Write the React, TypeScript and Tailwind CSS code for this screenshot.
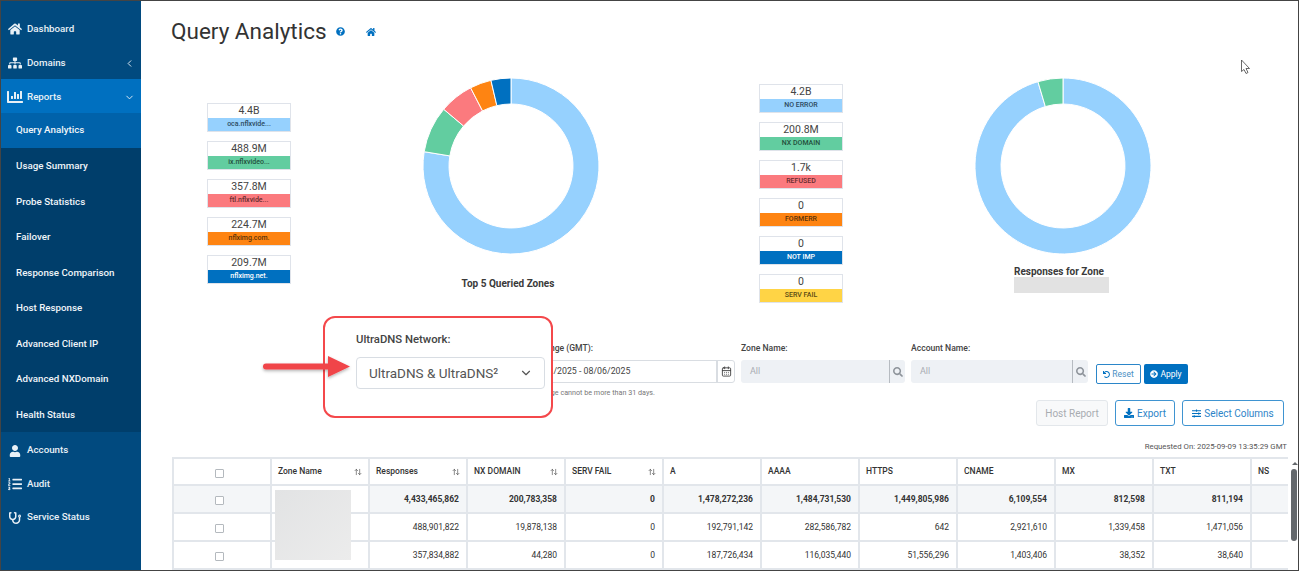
import React from 'react';
import { ChevronDown, ChevronLeft, ArrowUpDown, CalendarDays } from 'lucide-react';
import {
  FaHome, FaSitemap, FaChartBar, FaUser, FaListOl, FaStethoscope, FaQuestionCircle,
  FaSearch, FaUndo, FaArrowCircleRight, FaDownload, FaSlidersH,
} from 'react-icons/fa';

const subItems = [
  'Query Analytics', 'Usage Summary', 'Probe Statistics', 'Failover', 'Response Comparison',
  'Host Response', 'Advanced Client IP', 'Advanced NXDomain', 'Health Status',
];

const zones = [
  { value: '4.4B', label: 'oca.nflxvide...', bg: 'bg-[#96d1fe]', text: 'text-[#2c4a60]' },
  { value: '488.9M', label: 'ix.nflxvideo...', bg: 'bg-[#62cda0]', text: 'text-[#24503c]' },
  { value: '357.8M', label: 'ftl.nflxvide...', bg: 'bg-[#fb7a7e]', text: 'text-[#662c2e]' },
  { value: '224.7M', label: 'nflximg.com.', bg: 'bg-[#fe8412]', text: 'text-[#5a3208]' },
  { value: '209.7M', label: 'nflximg.net.', bg: 'bg-[#0070c0]', text: 'text-white' },
];

const responses = [
  { value: '4.2B', label: 'NO ERROR', bg: 'bg-[#96d1fe]', text: 'text-[#2c4a60]' },
  { value: '200.8M', label: 'NX DOMAIN', bg: 'bg-[#62cda0]', text: 'text-[#24503c]' },
  { value: '1.7k', label: 'REFUSED', bg: 'bg-[#fb7a7e]', text: 'text-[#662c2e]' },
  { value: '0', label: 'FORMERR', bg: 'bg-[#fe8412]', text: 'text-[#5a3208]' },
  { value: '0', label: 'NOT IMP', bg: 'bg-[#0070c0]', text: 'text-white' },
  { value: '0', label: 'SERV FAIL', bg: 'bg-[#ffd445]', text: 'text-[#5c4c14]' },
];

const columns = ['A', 'AAAA', 'HTTPS', 'CNAME', 'MX', 'TXT', 'NS'];

const rows = [
  ['4,433,465,862', '200,783,358', '0', '1,478,272,236', '1,484,731,530', '1,449,805,986', '6,109,554', '812,598', '811,194', ''],
  ['488,901,822', '19,878,138', '0', '192,791,142', '282,586,782', '642', '2,921,610', '1,339,458', '1,471,056', ''],
  ['357,834,882', '44,280', '0', '187,726,434', '116,035,440', '51,556,296', '1,403,406', '38,352', '38,640', ''],
];

const ringPath = (from: number, to: number) => {
  const pt = (f: number, r: number) => {
    const a = f * 2 * Math.PI;
    return `${(88 + r * Math.sin(a)).toFixed(2)} ${(88 - r * Math.cos(a)).toFixed(2)}`;
  };
  const large = to - from > 0.5 ? 1 : 0;
  return `M${pt(from, 88)} A88 88 0 ${large} 1 ${pt(to, 88)} L${pt(to, 62)} A62 62 0 ${large} 0 ${pt(from, 62)} Z`;
};

const Donut = ({ parts }: { parts: { share: number; color: string }[] }) => {
  let start = 0;
  return (
    <svg width="176" height="176" viewBox="0 0 176 176">
      {parts.map((p) => {
        const d = ringPath(start, start + p.share);
        start += p.share;
        return <path key={p.color} d={d} fill={p.color} stroke="#fff" strokeWidth="1" />;
      })}
    </svg>
  );
};

const Legend = ({ items }: { items: typeof zones }) => (
  <div className="flex flex-col gap-[9px] w-[84px]">
    {items.map((item) => (
      <div key={item.label} className="h-[29px] border-[1.5px] border-[#dfe3ea] flex flex-col">
        <div className="h-[14px] pt-[1px] flex items-center justify-center text-[10.5px] leading-none text-[#444]">{item.value}</div>
        <div className={`flex-1 flex items-center justify-center text-[7px] font-medium leading-none ${item.bg} ${item.text}`}>
          {item.label}
        </div>
      </div>
    ))}
  </div>
);

const NavItem = ({ icon, label, chevron, active, height = 'h-[34px]' }: { icon: React.ReactNode; label: string; chevron?: React.ReactNode; active?: boolean; height?: string }) => (
  <div className={`${height} pt-[2px] flex items-center text-[9.75px] font-medium text-[#e8f0f6] ${active ? 'bg-[#0070c0]' : ''}`}>
    <span className="w-[26px] flex justify-center pl-[2px] shrink-0">{icon}</span>
    <span className="flex-1">{label}</span>
    {chevron && <span className="mr-[6px]">{chevron}</span>}
  </div>
);

const Sidebar = () => (
  <aside className="w-[140px] shrink-0 h-full bg-[#014a7f] pt-[10px]">
    <NavItem icon={<FaHome size={14} />} label="Dashboard" />
    <NavItem icon={<FaSitemap size={14} />} label="Domains" chevron={<ChevronLeft size={11} />} />
    <NavItem icon={<FaChartBar size={16} />} label="Reports" active chevron={<ChevronDown size={11} />} />
    <div className="bg-[#003e6b] h-[319px]">
      {subItems.map((item, i) => (
        <div
          key={item}
          className={`flex items-center pl-[15px] text-[9.75px] font-medium text-[#f0f5f9] ${i === 0 ? 'h-[35px] pb-[1px] bg-[#0062aa]' : 'h-[35.5px] pt-[2px]'}`}
        >
          {item}
        </div>
      ))}
    </div>
    <div className="pt-[1px]">
      <NavItem icon={<FaUser size={12} />} label="Accounts" height="h-[33.5px]" />
      <NavItem icon={<FaListOl size={14} />} label="Audit" height="h-[33.5px]" />
      <NavItem icon={<FaStethoscope size={12} />} label="Service Status" height="h-[33.5px]" />
    </div>
  </aside>
);

const SearchInput = ({ width }: { width: string }) => (
  <div className={`${width} h-[23px] bg-[#eef1f5] rounded-[3px] flex items-center text-[9px] text-[#a9adb3]`}>
    <span className="flex-1 pl-[9px]">All</span>
    <span className="w-[16px] h-full border-l border-[#b6bbc1] flex items-center justify-center text-[#8e949b]">
      <FaSearch size={10} />
    </span>
  </div>
);

const Filters = () => (
  <div className="h-[59px] ml-[379px] flex items-start gap-[6px] pt-[1px]">
    <div className="w-[215px]">
      <div className="h-[12px] text-[8.6px] font-medium leading-[12px] text-[#444]">Date Range (GMT):</div>
      <div className="mt-[6px] h-[23px] border border-[#d9dde2] rounded-[3px] flex items-center text-[8.8px] text-[#444]">
        <span className="flex-1 pl-[9px]">08/01/2025 - 08/06/2025</span>
        <span className="w-[18px] h-full border-l-2 border-[#d9dde2] flex items-center justify-center">
          <CalendarDays size={11} />
        </span>
      </div>
      <div className="mt-[5px] pl-[4px] text-[7.2px] leading-[10px] text-[#777]">Date range cannot be more than 31 days.</div>
    </div>
    <div className="w-[164px]">
      <div className="h-[12px] text-[8.6px] font-medium leading-[12px] text-[#444]">Zone Name:</div>
      <div className="mt-[6px]"><SearchInput width="w-[164px]" /></div>
    </div>
    <div className="w-[177px]">
      <div className="h-[12px] text-[8.6px] font-medium leading-[12px] text-[#444]">Account Name:</div>
      <div className="mt-[6px]"><SearchInput width="w-[177px]" /></div>
    </div>
    <div className="ml-[2px] mt-[22px] flex gap-[3px]">
      <button className="w-[45px] h-[20px] border border-[#2b86c9] rounded-[2px] text-[8.5px] text-[#4a8fc4] flex items-center justify-center gap-[2px]">
        <FaUndo size={7} className="text-[#0070c0]" />Reset
      </button>
      <button className="w-[44px] h-[20px] bg-[#0070c0] rounded-[2px] text-[8.5px] text-white flex items-center justify-center gap-[2px]">
        <FaArrowCircleRight size={8} />Apply
      </button>
    </div>
  </div>
);

const Actions = () => (
  <div className="h-[26px] pr-[14px] flex justify-end gap-[7px] text-[10px]">
    <button className="w-[72px] border border-[#e3e7eb] bg-[#f8f9fa] rounded-[3px] text-[#a8acb1]">Host Report</button>
    <button className="w-[60px] border border-[#3f94d1] rounded-[3px] text-[#2d84c8] flex items-center justify-center gap-[3px]">
      <FaDownload size={10} className="text-[#0070c0]" />Export
    </button>
    <button className="w-[102px] border border-[#3f94d1] rounded-[3px] text-[#2d84c8] flex items-center justify-center gap-[3px]">
      <FaSlidersH size={9} className="text-[#0070c0]" />Select Columns
    </button>
  </div>
);

const Checkbox = () => <span className="inline-block align-middle w-[9px] h-[9px] border border-[#b4b9be] rounded-[1px] bg-white" />;

const cellBorder = 'border-r-2 border-b-2 border-[#e2e6eb]';

const SortHead = ({ label }: { label: string }) => (
  <th className={`${cellBorder} px-[6px] text-left font-medium`}>
    <div className="flex items-center justify-between">
      {label}
      <ArrowUpDown size={8} className="text-[#555]" />
    </div>
  </th>
);

const DataTable = () => (
  <div className="relative ml-[31px] mt-[4px] w-[1116px] h-[113px] overflow-hidden">
    <table className="table-fixed border-collapse w-[1177px] text-[8.5px] text-[#333] border-t-2 border-l-2 border-[#e2e6eb]">
      <colgroup>
        {Array.from({ length: 12 }).map((_, i) => <col key={i} className="w-[98px]" />)}
      </colgroup>
      <thead>
        <tr className="h-[27px]">
          <th className={`${cellBorder} pr-[5px] pt-[3px]`}><Checkbox /></th>
          {['Zone Name', 'Responses', 'NX DOMAIN', 'SERV FAIL'].map((c) => <SortHead key={c} label={c} />)}
          {columns.map((c) => (
            <th key={c} className={`${cellBorder} px-[6px] text-left font-medium`}>{c}</th>
          ))}
        </tr>
      </thead>
      <tbody>
        {rows.map((row, i) => (
          <tr key={row[0]} className={`h-[28px] ${i === 0 ? 'bg-[#f4f6f8] font-bold' : ''}`}>
            <td className={`${cellBorder} text-center pr-[5px] pt-[2px]`}><Checkbox /></td>
            <td className={`${cellBorder} ${i === 0 ? 'bg-white' : ''}`} />
            {row.map((v, j) => (
              <td key={j} className={`${cellBorder} px-[7px] pt-[1px] text-right`}>{v}</td>
            ))}
          </tr>
        ))}
        <tr className="h-[28px]">
          {Array.from({ length: 12 }).map((_, i) => <td key={i} className="border-r-2 border-[#e2e6eb]" />)}
        </tr>
      </tbody>
    </table>
    {/* redacted zone names */}
    <div className="absolute left-[103px] top-[33px] w-[76px] h-[70px] bg-gradient-to-br from-[#e2e3e4] to-[#ececec]" />
  </div>
);

export default function App() {
  return (
    <div className="relative w-[1299px] h-[571px] overflow-hidden border border-[#444] bg-white flex font-['Roboto',sans-serif]">
      <Sidebar />
      <main className="flex-1 min-w-0">
        <header className="h-[60px] pt-[1px] flex items-center pl-[30px]">
          <h1 className="text-[22.5px] font-normal text-[#333]">Query Analytics</h1>
          <FaQuestionCircle size={9} className="ml-[9px] text-[#0070c0]" />
          <FaHome size={10} className="ml-[21px] text-[#0070c0]" />
        </header>

        <section className="h-[280px] flex items-start">
          <div className="ml-[66px] mt-[42px]"><Legend items={zones} /></div>
          <div className="ml-[132px] mt-[17px] w-[176px]">
            <Donut parts={[
              { share: 0.776, color: '#96d1fe' },
              { share: 0.0855, color: '#62cda0' },
              { share: 0.0626, color: '#fb7a7e' },
              { share: 0.0393, color: '#fe8412' },
              { share: 0.0366, color: '#0070c0' },
            ]} />
            <div className="mt-[22px] pr-[6px] text-center text-[10px] font-bold text-[#3a3a3a]">Top 5 Queried Zones</div>
          </div>
          <div className="ml-[160px] mt-[23px]"><Legend items={responses} /></div>
          <div className="ml-[132px] mt-[17px] w-[176px]">
            <Donut parts={[
              { share: 0.954, color: '#96d1fe' },
              { share: 0.046, color: '#62cda0' },
            ]} />
            <div className="mt-[12px] pr-[8px] text-center text-[10px] leading-[12px] font-bold text-[#3a3a3a]">Responses for Zone</div>
            <div className="ml-[39px] mt-[-1px] w-[95px] h-[16px] bg-[#e2e2e2]" />
          </div>
        </section>

        <Filters />
        <Actions />
        <div className="mt-[15px] pr-[11px] h-[12px] text-right text-[7.8px] leading-[12px] text-[#555]">
          Requested On: 2025-09-09 13:35:29 GMT
        </div>
        <DataTable />
      </main>

      {/* callout added over the screenshot */}
      <div className="absolute left-[322px] top-[315px] w-[230px] h-[102px] bg-white border-2 border-[#f4484b] rounded-[12px] pt-[15px] pl-[31px] text-[#444]">
        <div className="text-[11.3px] font-medium leading-[14px]">UltraDNS Network:</div>
        <div className="mt-[10px] w-[189px] h-[32px] border border-[#d8dde3] rounded-[4px] flex items-center justify-between pl-[12px] pr-[11px] text-[13.5px] text-[#555]">
          UltraDNS & UltraDNS²
          <ChevronDown size={14} />
        </div>
      </div>
      <svg className="absolute left-[258px] top-[350px]" width="100" height="34" viewBox="0 0 100 34">
        <defs>
          <filter id="arrowShadow" x="-10%" y="-30%" width="120%" height="170%">
            <feDropShadow dx="0" dy="1.5" stdDeviation="1.5" floodColor="#000" floodOpacity="0.3" />
          </filter>
        </defs>
        <path d="M7 12.5 H69 V5 L91 15.5 L69 26 V18.5 H7 Q4 18.5 4 15.5 Q4 12.5 7 12.5 Z" fill="#f0444a" filter="url(#arrowShadow)" />
      </svg>

      {/* table scrollbar */}
      <div className="absolute left-[1290px] top-[468px] w-[6px] h-[72px] rounded-[3px] bg-[#63676b]" />
      <div className="absolute left-[1291px] top-[461px] w-0 h-0 border-x-[3px] border-x-transparent border-b-[3px] border-b-[#63676b]" />

      {/* mouse pointer in the capture */}
      <svg className="absolute left-[1239px] top-[58px]" width="11" height="16" viewBox="0 0 11 16">
        <path d="M1.5 1 V12.5 L4 10.5 L6 14.5 L8 13.5 L6 9.5 H9.5 Z" fill="#fff" stroke="#444" strokeWidth="0.8" />
      </svg>
    </div>
  );
}
